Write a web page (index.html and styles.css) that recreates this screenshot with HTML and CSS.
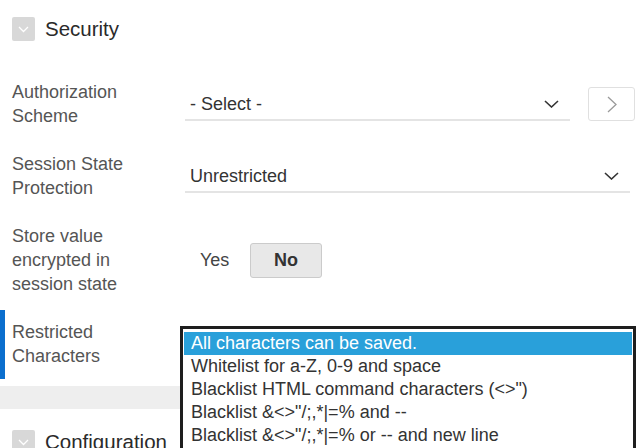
FILE: index.html
```html
<!DOCTYPE html>
<html>
<head>
<meta charset="utf-8">
<link rel="stylesheet" href="styles.css">
</head>
<body>
<div class="page">
  <div class="section-header first">
    <span class="toggle"><svg width="11" height="7" viewBox="0 0 11 7"><path d="M1 1 L5.5 5.5 L10 1" fill="none" stroke="#fff" stroke-width="1.3"/></svg></span>
    <span class="section-title">Security</span>
  </div>

  <div class="row row-auth">
    <div class="label">Authorization<br>Scheme</div>
    <div class="field">
      <div class="select"><span>- Select -</span>
        <svg class="chev" width="15" height="8" viewBox="0 0 15 8"><path d="M1 1 L7.5 7 L14 1" fill="none" stroke="#333" stroke-width="1.6"/></svg>
      </div>
      <div class="go-btn"><svg width="10" height="17" viewBox="0 0 10 17"><path d="M1 1 L9 8.5 L1 16" fill="none" stroke="#9a9a9a" stroke-width="1.3"/></svg></div>
    </div>
  </div>

  <div class="row row-session">
    <div class="label">Session State<br>Protection</div>
    <div class="field">
      <div class="select"><span>Unrestricted</span>
        <svg class="chev" width="15" height="8" viewBox="0 0 15 8"><path d="M1 1 L7.5 7 L14 1" fill="none" stroke="#333" stroke-width="1.6"/></svg>
      </div>
    </div>
  </div>

  <div class="row">
    <div class="label">Store value<br>encrypted in<br>session state</div>
    <div class="field">
      <div class="yesno">
        <span class="opt-yes">Yes</span>
        <span class="opt-no">No</span>
      </div>
    </div>
  </div>

  <div class="row active">
    <div class="label">Restricted<br>Characters</div>
    <div class="field"></div>
  </div>

  <div class="band"></div>

  <div class="section-header">
    <span class="toggle"><svg width="11" height="7" viewBox="0 0 11 7"><path d="M1 1 L5.5 5.5 L10 1" fill="none" stroke="#fff" stroke-width="1.3"/></svg></span>
    <span class="section-title">Configuration</span>
  </div>

  <div class="listbox">
    <div class="option selected">All characters can be saved.</div>
    <div class="option">Whitelist for a-Z, 0-9 and space</div>
    <div class="option">Blacklist HTML command characters (&lt;&gt;&quot;)</div>
    <div class="option">Blacklist &amp;&lt;&gt;&quot;/;,*|=% and --</div>
    <div class="option">Blacklist &amp;&lt;&gt;&quot;/;,*|=% or -- and new line</div>
    <div class="option">Blacklist &amp;&lt;&gt;&quot;/;,*|=% or -- and new line</div>
  </div>
</div>
</body>
</html>
```

FILE: styles.css
```css
html, body {
  margin: 0;
  padding: 0;
  overflow: hidden;
  background: #fff;
}
body {
  font-family: "Liberation Sans", Arial, sans-serif;
  color: #333;
}
.page {
  position: relative;
  width: 636px;
  height: 448px;
  overflow: hidden;
}
.section-header {
  display: flex;
  align-items: center;
  padding: 21px 12px 0;
  height: 24px;
}
.section-header.first {
  padding-top: 17px;
  padding-bottom: 27px;
}
.toggle {
  width: 23px;
  height: 24px;
  background: #d8d8d8;
  border-radius: 2px;
  display: flex;
  align-items: center;
  justify-content: center;
  margin-right: 10px;
}
.section-title {
  font-size: 20.5px;
  color: #2a2a2a;
}
.row {
  display: flex;
  align-items: center;
  padding: 12px 0 12px 12px;
  position: relative;
}
.row.active::before {
  content: "";
  position: absolute;
  left: 0;
  top: 2px;
  bottom: 1px;
  width: 5px;
  background: #0b6fce;
}
.label {
  width: 173px;
  flex: none;
  font-size: 18px;
  line-height: 24px;
  color: #555;
}
.field {
  flex: 1;
  display: flex;
  align-items: center;
}
.row-auth .field {
  padding-right: 1px;
}
.row-session .field {
  padding-right: 6px;
}
.select {
  flex: 1;
  height: 34px;
  box-sizing: border-box;
  border-bottom: 2px solid #e4e4e4;
  display: flex;
  align-items: center;
  justify-content: space-between;
  padding: 2px 11px 0 5px;
  font-size: 18px;
  color: #333;
}
.chev {
  display: block;
}
.go-btn {
  width: 47px;
  height: 34px;
  box-sizing: border-box;
  margin-left: 18px;
  border: 1px solid #e0e0e0;
  border-radius: 3px;
  display: flex;
  align-items: center;
  justify-content: center;
}
.yesno {
  display: flex;
  align-items: center;
  font-size: 18px;
}
.opt-yes {
  width: 65px;
  box-sizing: border-box;
  padding-left: 15px;
  color: #444;
}
.opt-no {
  width: 72px;
  height: 35px;
  box-sizing: border-box;
  border: 1px solid #cbcbcb;
  background: #e8e8e8;
  border-radius: 3px;
  display: flex;
  align-items: center;
  justify-content: center;
  font-weight: bold;
  color: #333;
}
.band {
  margin-top: 6px;
  height: 23px;
  background: #eeeeee;
}
.listbox {
  position: absolute;
  left: 180px;
  top: 326px;
  width: 456px;
  box-sizing: border-box;
  border: 3px solid #1e1e1e;
  padding: 3px 1px 0 1px;
  background: #fff;
}
.option {
  height: 23px;
  line-height: 23px;
  padding-left: 7px;
  font-size: 18px;
  color: #333;
  white-space: nowrap;
}
.option.selected {
  background: #29a0da;
  color: #fff;
}
```
